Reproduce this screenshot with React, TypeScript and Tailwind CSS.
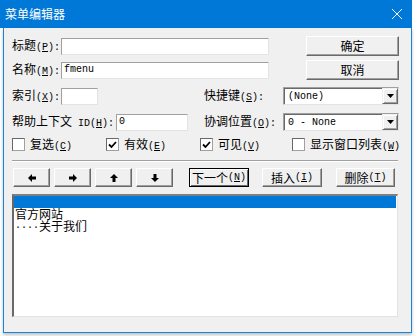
import React from "react";

const mono = "font-['Liberation_Mono',monospace] text-[10px]";

function U({ k }: { k: string }) {
  return <span className="underline underline-offset-[1px]">{k}</span>;
}

function Lbl({
  t,
  k,
  pre = "",
  colon = true,
  w,
  className = "",
}: {
  t: string;
  k: string;
  pre?: string;
  colon?: boolean;
  w?: string;
  className?: string;
}) {
  return (
    <div className={`flex items-baseline whitespace-pre ${w ?? ""} ${className}`}>
      <span>{t}</span>
      <span className={mono}>
        {pre}(<U k={k} />){colon ? ":" : ""}
      </span>
    </div>
  );
}

function Field({ w, value = "" }: { w: string; value?: string }) {
  return (
    <div
      className={`${w} h-[17px] bg-white border border-t-[#a0a0a0] border-l-[#a0a0a0] border-r-[#e3e3e3] border-b-[#e3e3e3] flex items-center pl-[2px] ${mono}`}
    >
      {value}
    </div>
  );
}

function Btn({ className = "", focus = false, children }: { className?: string; focus?: boolean; children: React.ReactNode }) {
  const edge = focus
    ? "border border-black shadow-[inset_1px_1px_0_#fff,inset_-1px_-1px_0_#696969]"
    : "border border-t-white border-l-white border-r-[#696969] border-b-[#696969] shadow-[inset_-1px_-1px_0_#a0a0a0]";
  return (
    <div className={`flex items-center justify-center bg-[#f0f0f0] ${edge} ${className}`}>
      {children}
    </div>
  );
}

function Select({ value }: { value: string }) {
  return (
    <div className="flex w-[116px] h-[18px] bg-white border border-t-[#a0a0a0] border-l-[#a0a0a0] border-r-[#e3e3e3] border-b-[#e3e3e3] shadow-[inset_1px_1px_0_#696969]">
      <div className={`flex-1 flex items-center pl-[4px] pt-[1px] ${mono}`}>{value}</div>
      <div className="w-[16px] h-[16px] bg-[#f0f0f0] border border-t-[#f0f0f0] border-l-[#f0f0f0] border-r-[#696969] border-b-[#696969] shadow-[inset_1px_1px_0_#fff,inset_-1px_-1px_0_#a0a0a0] flex items-center justify-center">
        <svg width="7" height="4" viewBox="0 0 7 4">
          <path d="M0 0H7L3.5 4Z" fill="#000" />
        </svg>
      </div>
    </div>
  );
}

function Check({ on, t, k, w }: { on: boolean; t: string; k: string; w?: string }) {
  return (
    <div className={`flex items-center gap-[5px] ${w ?? ""}`}>
      <div className="w-[13px] h-[13px] bg-white border border-t-[#696969] border-l-[#696969] border-r-[#a0a0a0] border-b-[#a0a0a0] flex items-center justify-center">
        {on && (
          <svg width="9" height="8" viewBox="0 0 9 8">
            <path d="M1 3.5L3.5 6L8 1" stroke="#000" strokeWidth="1.8" fill="none" />
          </svg>
        )}
      </div>
      <Lbl t={t} k={k} colon={false} />
    </div>
  );
}

function Arrow({ rot }: { rot: string }) {
  return (
    <svg width="8" height="8" viewBox="0 0 8 8" className={rot}>
      <path d="M0 4L4 0V2.5H8V5.5H4V8Z" fill="#000" />
    </svg>
  );
}

export default function App() {
  return (
    <div className="w-[415px] h-[336px] bg-white font-['Noto_Sans_CJK_SC',sans-serif] text-[12px] leading-none text-black">
      <div className="h-[28px] w-[412px] bg-[#0078d7] flex items-center justify-between pl-[5px] pr-[10px] text-white">
        <span>菜单编辑器</span>
        <svg width="10" height="10" viewBox="0 0 10 10">
          <path d="M0 0L10 10M10 0L0 10" stroke="#fff" strokeWidth="1" />
        </svg>
      </div>
      <div className="ml-[3px] w-[409px] h-[305px] bg-[#f0f0f0] border-x border-b border-[#1883d7] pl-[8px] pt-[8px] shadow-[0_2px_3px_rgba(0,0,0,0.25)]">
        <div className="flex items-center h-[20px]">
          <Lbl t="标题" k="P" w="w-[49px]" />
          <Field w="w-[208px]" />
          <Btn className="ml-[37px] w-[93px] h-[20px]">确定</Btn>
        </div>
        <div className="flex items-center h-[20px] mt-[4px]">
          <Lbl t="名称" k="M" w="w-[49px]" />
          <Field w="w-[208px]" value="fmenu" />
          <Btn className="ml-[37px] w-[93px] h-[20px]">取消</Btn>
        </div>
        <div className="flex items-center h-[18px] mt-[7px]">
          <Lbl t="索引" k="X" w="w-[49px]" />
          <Field w="w-[37px]" />
          <Lbl t="快捷键" k="S" w="w-[79px]" className="ml-[106px]" />
          <Select value="(None)" />
        </div>
        <div className="flex items-center h-[18px] mt-[8px]">
          <Lbl t="帮助上下文" k="H" pre=" ID" w="w-[104px]" />
          <Field w="w-[72px]" value="0" />
          <Lbl t="协调位置" k="O" w="w-[79px]" className="ml-[16px]" />
          <Select value="0 - None" />
        </div>
        <div className="flex items-center h-[13px] mt-[7px]">
          <Check on={false} t="复选" k="C" w="w-[94px]" />
          <Check on={true} t="有效" k="E" w="w-[94px]" />
          <Check on={true} t="可见" k="V" w="w-[92px]" />
          <Check on={false} t="显示窗口列表" k="W" />
        </div>
        <div className="mt-[9px] w-[386px] border-t border-b border-t-[#a0a0a0] border-b-white" />
        <div className="flex items-center h-[19px] mt-[6px] pl-[1px]">
          <div className="flex gap-[4px]">
            <Btn className="w-[37px] h-[19px]"><Arrow rot="" /></Btn>
            <Btn className="w-[37px] h-[19px]"><Arrow rot="rotate-180" /></Btn>
            <Btn className="w-[37px] h-[19px]"><Arrow rot="rotate-90" /></Btn>
            <Btn className="w-[37px] h-[19px]"><Arrow rot="-rotate-90" /></Btn>
          </div>
          <Btn focus className="ml-[16px] w-[60px] h-[19px]">
            <span>下一个</span>
            <span className={mono}>(<U k="N" />)</span>
          </Btn>
          <Btn className="ml-[13px] w-[60px] h-[19px]">
            <span>插入</span>
            <span className={mono}>(<U k="I" />)</span>
          </Btn>
          <Btn className="ml-[14px] w-[59px] h-[19px]">
            <span>删除</span>
            <span className={mono}>(<U k="T" />)</span>
          </Btn>
        </div>
        <div className="mt-[7px] w-[386px] h-[123px] bg-white border-t-2 border-l-2 border-r border-b border-t-[#808080] border-l-[#696969] border-r-[#e3e3e3] border-b-[#e3e3e3] leading-[12px]">
          <div className="h-[12px] bg-[#0078d7] mr-[1px]" />
          <div className="pl-[1px] h-[12px]">官方网站</div>
          <div className="pl-[1px] h-[12px] flex">
            <span className={mono}>....</span>
            <span>关于我们</span>
          </div>
        </div>
      </div>
    </div>
  );
}
